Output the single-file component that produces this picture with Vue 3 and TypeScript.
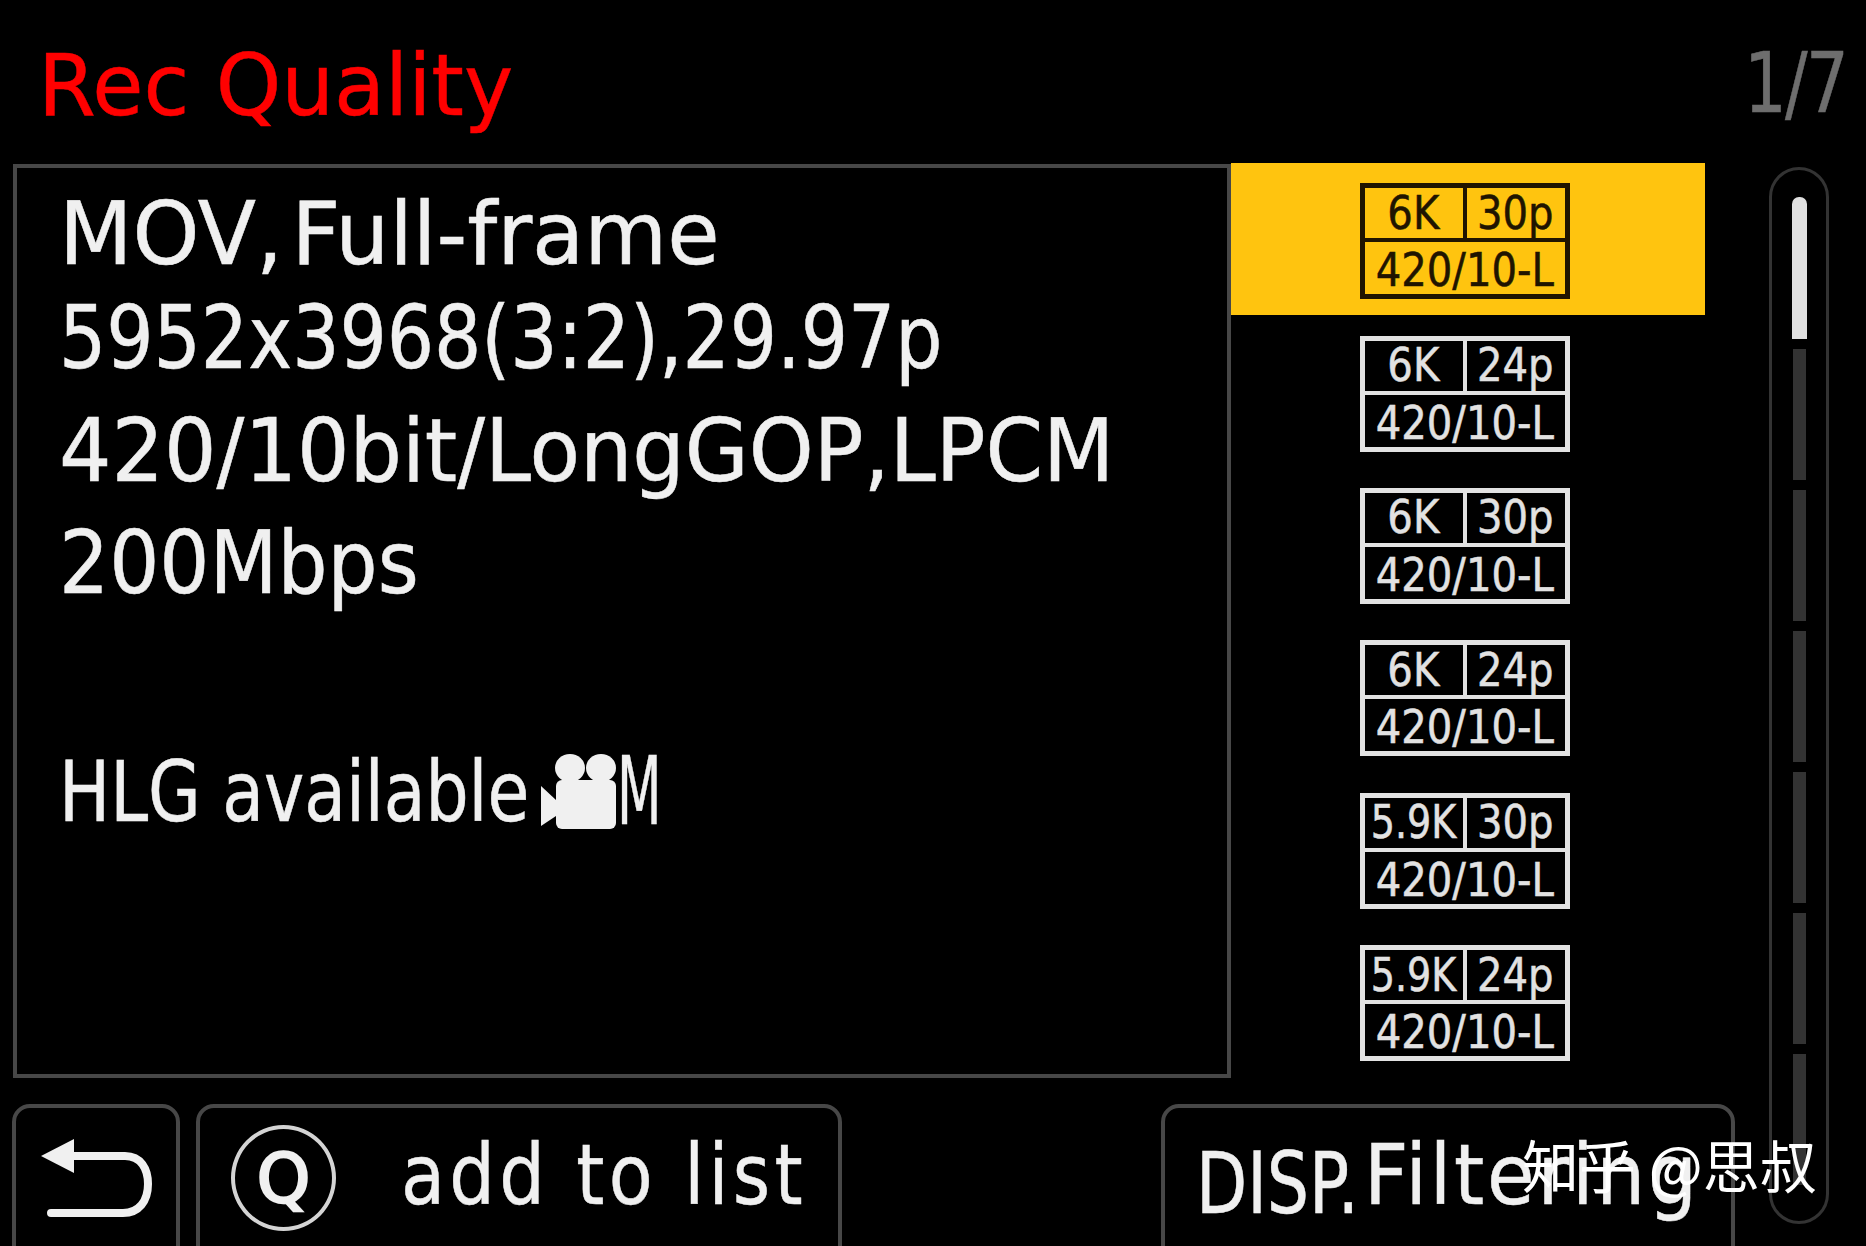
<script setup lang="ts">
interface Mode {
  size: string
  rate: string
}

const modes: Mode[] = [
  { size: '6K', rate: '30p' },
  { size: '6K', rate: '24p' },
  { size: '6K', rate: '30p' },
  { size: '6K', rate: '24p' },
  { size: '5.9K', rate: '30p' },
  { size: '5.9K', rate: '24p' },
]

const segments = 6
</script>

<template>
  <div class="screen">
    <div class="content">
      <header class="head">
        <h1 class="title">Rec Quality</h1>
        <span class="page">1/7</span>
      </header>

      <main class="middle">
        <section class="info">
          <div class="line l1"><span>MOV,&#8202;Full-frame</span></div>
          <div class="line l2"><span>5952x3968(3:2),29.97p</span></div>
          <div class="line l3"><span>420/10bit/LongGOP,LPCM</span></div>
          <div class="line l4"><span>200Mbps</span></div>
          <div class="hlg">
            <span class="hlg-text">HLG available</span>
            <svg class="cam" width="78" height="76" viewBox="0 0 78 76">
              <ellipse cx="29" cy="14" rx="15" ry="14" />
              <ellipse cx="60" cy="14" rx="15" ry="14" />
              <rect x="15" y="26" width="60" height="49" rx="6" />
              <path d="M0 32 L15 46 V62 L0 72 Z" />
            </svg>
            <span class="hlg-m">M</span>
          </div>
        </section>

        <ul class="modes">
          <li v-for="(m, i) in modes" :key="i" class="mode" :class="{ active: i === 0 }">
            <div class="badge">
              <span class="cell size" :class="{ wide: m.size.length > 2 }"><b>{{ m.size }}</b></span>
              <span class="cell rate"><b>{{ m.rate }}</b></span>
              <span class="cell codec"><b>420/10-L</b></span>
            </div>
          </li>
        </ul>
      </main>

      <footer class="foot">
        <div class="btn back">
          <svg width="112" height="80" viewBox="0 0 112 80">
            <path class="arrow" d="M0 17 L33 0 V34 Z" />
            <path class="turn" d="M30 17 H84 C100 17 107 30 107 45 C107 62 98 74 82 74 H10" />
          </svg>
        </div>
        <div class="btn add">
          <span class="q">Q</span>
          <span class="add-text">add to list</span>
        </div>
        <div class="btn filter">
          <span class="disp">DISP.</span>
          <span class="filter-text">Filtering</span>
        </div>
      </footer>
    </div>

    <aside class="scroll">
      <div class="thumb" />
      <div v-for="n in segments" :key="n" class="seg" />
    </aside>

    <div class="mark">知乎 @思叔</div>
  </div>
</template>

<style scoped>
.screen {
  position: relative;
  display: flex;
  width: 1866px;
  height: 1246px;
  overflow: hidden;
  background: #000;
  color: #f0f0f0;
  font-family: "DejaVu Sans Condensed", "DejaVu Sans", sans-serif;
  -webkit-text-stroke: 0.5px currentColor;
}

.content {
  width: 1735px;
  margin-left: 13px;
  flex: none;
}

.head {
  display: flex;
  justify-content: space-between;
  height: 163px;
}

.title {
  margin: 0;
  padding: 36px 0 0 25px;
  font-size: 85px;
  font-weight: 400;
  line-height: 100px;
  color: #f00;
  font-family: "DejaVu Sans", sans-serif;
  transform: scaleX(0.98);
  transform-origin: 25px 0;
}

.page {
  width: 110px;
  margin-right: -106px;
  padding-top: 33px;
  font-size: 84px;
  line-height: 100px;
  color: #6e6e6e;
  letter-spacing: -2px;
  transform: scaleX(0.89);
  transform-origin: 0 50%;
  flex: none;
}

.middle {
  display: flex;
  height: 916px;
}

.info {
  box-sizing: border-box;
  width: 1218px;
  height: 914px;
  margin-top: 1px;
  padding: 0 0 0 42px;
  border: 4px solid #474747;
}

.line {
  height: 108px;
  font-size: 88px;
  line-height: 108px;
  white-space: nowrap;
}

.line span {
  display: inline-block;
  transform-origin: 0 50%;
}

.l1 {
  height: 104px;
  margin-top: 12px;
}

.l1 span {
  transform: scaleX(1.075);
}

.l2 {
  height: 113px;
}

.l2 span {
  transform: scaleX(0.939);
}

.l3 {
  height: 112px;
}

.l3 span {
  transform: scaleX(1.043);
}

.l4 span {
  transform: scaleX(0.996);
}

.hlg {
  display: flex;
  align-items: center;
  height: 90px;
  margin-top: 130px;
  white-space: nowrap;
}

.hlg-text {
  width: 482px;
  font-size: 84px;
  line-height: 90px;
  transform: scaleX(0.9);
  transform-origin: 0 50%;
  flex: none;
}

.cam {
  flex: none;
  fill: #f0f0f0;
}

.hlg-m {
  font-size: 94px;
  line-height: 90px;
  margin-left: -2px;
  transform: scaleX(0.61);
  transform-origin: 0 50%;
}

.modes {
  width: 474px;
  margin: 0;
  padding: 0;
  list-style: none;
}

.mode {
  display: flex;
  align-items: center;
  justify-content: center;
  height: 152.4px;
  color: #e2e2e2;
}

.mode.active {
  background: #ffc40f;
  color: #201400;
}

.badge {
  box-sizing: border-box;
  display: grid;
  grid-template-columns: 102px 98px;
  grid-template-rows: 54px 1fr;
  width: 210px;
  height: 116px;
  margin: 4px 0 0 -7px;
  border: 5px solid currentColor;
}

.cell {
  display: flex;
  align-items: center;
  justify-content: center;
  min-width: 0;
  font-size: 47px;
  line-height: 50px;
  white-space: nowrap;
}

.cell b {
  display: block;
  margin-top: -1px;
  font-weight: 400;
  transform: scaleX(0.95);
}

.size.wide b {
  transform: scaleX(0.9);
}

.size {
  border-right: 4px solid currentColor;
  border-bottom: 4px solid currentColor;
}

.rate {
  border-bottom: 4px solid currentColor;
}

.codec {
  grid-column: 1 / 3;
}

.codec b {
  margin-top: 3px;
}

.foot {
  display: flex;
  height: 200px;
  margin-top: 25px;
  margin-left: -1px;
}

.btn {
  box-sizing: border-box;
  display: flex;
  height: 200px;
  border: 4px solid #474747;
  border-radius: 18px;
  white-space: nowrap;
}

.back {
  width: 168px;
  padding: 31px 0 0 25px;
  flex: none;
}

.arrow {
  fill: #f0f0f0;
}

.turn {
  fill: none;
  stroke: #f0f0f0;
  stroke-width: 8;
  stroke-linecap: round;
}

.add {
  width: 646px;
  margin-left: 16px;
  padding: 17px 0 0 31px;
  flex: none;
}

.q {
  box-sizing: border-box;
  display: flex;
  align-items: center;
  justify-content: center;
  width: 105px;
  height: 106px;
  border: 4px solid #d4d4d4;
  border-radius: 50%;
  font-family: "DejaVu Sans", sans-serif;
  font-size: 68px;
  -webkit-text-stroke: 2.5px currentColor;
  flex: none;
}

.add-text {
  margin: 1px 0 0 65px;
  font-family: "DejaVu Sans", sans-serif;
  font-size: 83px;
  line-height: 100px;
  letter-spacing: 5px;
  transform: scaleX(0.865);
  transform-origin: 0 50%;
}

.filter {
  width: 574px;
  margin-left: 319px;
  padding: 0 0 0 31px;
  flex: none;
}

.disp {
  width: 168px;
  margin-top: 25px;
  font-size: 86px;
  line-height: 100px;
  transform: scaleX(0.86);
  transform-origin: 0 50%;
  flex: none;
}

.filter-text {
  margin-top: 17px;
  font-family: "DejaVu Sans", sans-serif;
  font-size: 84px;
  line-height: 100px;
  letter-spacing: 3px;
  transform: scaleX(0.92);
  transform-origin: 0 50%;
  flex: none;
}

.scroll {
  box-sizing: border-box;
  display: flex;
  flex-direction: column;
  align-items: center;
  gap: 10px;
  width: 60px;
  height: 1057px;
  margin: 167px 0 0 21px;
  padding-top: 27px;
  border: 3px solid #333;
  border-radius: 30px;
  overflow: hidden;
  flex: none;
}

.thumb {
  width: 15px;
  height: 142px;
  background: #e0e0e0;
  border-radius: 7px 7px 0 0;
  flex: none;
}

.seg {
  width: 13px;
  height: 131px;
  background: #333;
  flex: none;
}

.mark {
  position: absolute;
  top: 1128px;
  left: 1522px;
  font-family: "Noto Sans CJK SC", sans-serif;
  font-size: 57px;
  line-height: 70px;
  color: #fff;
  white-space: nowrap;
  -webkit-text-stroke: 0;
}
</style>
